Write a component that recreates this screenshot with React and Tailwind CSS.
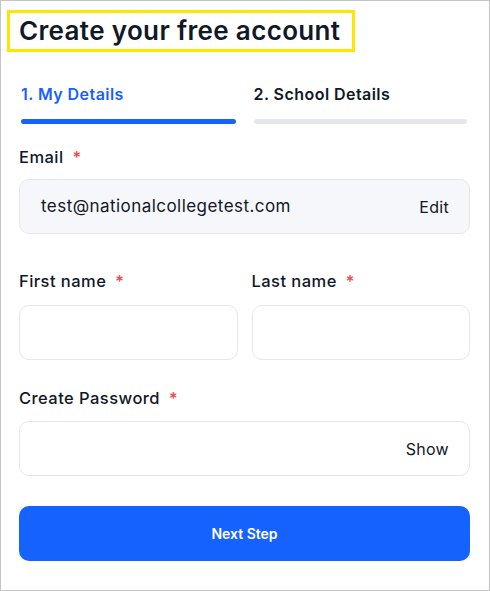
import React from "react";

const Label = ({ children }) => (
    <label className="flex items-center text-[16.5px] font-medium text-[#111827] leading-6 tracking-[0.45px]">
        {children}
        <span className="ml-[9px] text-[#ef4444]">*</span>
    </label>
);

export default function App() {
    return (
        <div
            className="w-[490px] h-[591px] bg-white border border-[#c4c4c4] overflow-hidden"
            style={{ fontFamily: "Inter, 'Open Sans', sans-serif" }}
        >
            <div className="pt-[9px] pl-[6px]">
                <div className="inline-block border-[3px] border-[#ffe600] pl-[9px] pr-[12px] py-[2px]">
                    <h1 className="text-[26px] font-semibold text-[#111827] leading-[32px] tracking-[0.35px]">
                        Create your free account
                    </h1>
                </div>
            </div>

            <div className="pl-[18px] pr-[19px]">
                <div className="grid grid-cols-2 gap-[18px] mt-[30px]">
                    <div>
                        <p className="pl-[2px] text-[16px] font-semibold text-[#1a5fff] leading-6 tracking-[0.45px]">
                            1. My Details
                        </p>
                        <div className="mt-[13px] ml-[2px] h-[5px] rounded-full bg-[#1662ff]" />
                    </div>
                    <div>
                        <p className="text-[16px] font-semibold text-[#111827] leading-6 tracking-[0.45px]">
                            2. School Details
                        </p>
                        <div className="mt-[13px] mr-[3px] h-[5px] rounded-full bg-[#e5e7eb]" />
                    </div>
                </div>

                <div className="mt-[21px]">
                    <Label>Email</Label>
                    <div className="mt-[10px] h-[55px] flex items-center justify-between rounded-[10px] border border-[#e5e7eb] bg-[#f5f7fa] pl-[21px] pr-[20px]">
                        <span className="text-[17px] text-[#111827] tracking-[0.45px]">
                            test@nationalcollegetest.com
                        </span>
                        <span className="text-[16px] text-[#111827] tracking-[0.3px]">Edit</span>
                    </div>
                </div>

                <div className="grid grid-cols-2 gap-[14px] mt-[35px]">
                    <div>
                        <Label>First name</Label>
                        <div className="mt-[12px] h-[55px] rounded-[10px] border border-[#e5e7eb] bg-white" />
                    </div>
                    <div>
                        <Label>Last name</Label>
                        <div className="mt-[12px] h-[55px] rounded-[10px] border border-[#e5e7eb] bg-white" />
                    </div>
                </div>

                <div className="mt-[26px]">
                    <Label>Create Password</Label>
                    <div className="mt-[11px] h-[55px] flex items-center justify-end rounded-[10px] border border-[#e5e7eb] bg-white pr-[20px]">
                        <span className="text-[16px] text-[#111827] tracking-[0.3px]">Show</span>
                    </div>
                </div>

                <button className="mt-[30px] w-full h-[55px] rounded-[10px] bg-[#1662ff] text-white text-[14px] font-semibold">
                    Next Step
                </button>
            </div>
        </div>
    );
}
